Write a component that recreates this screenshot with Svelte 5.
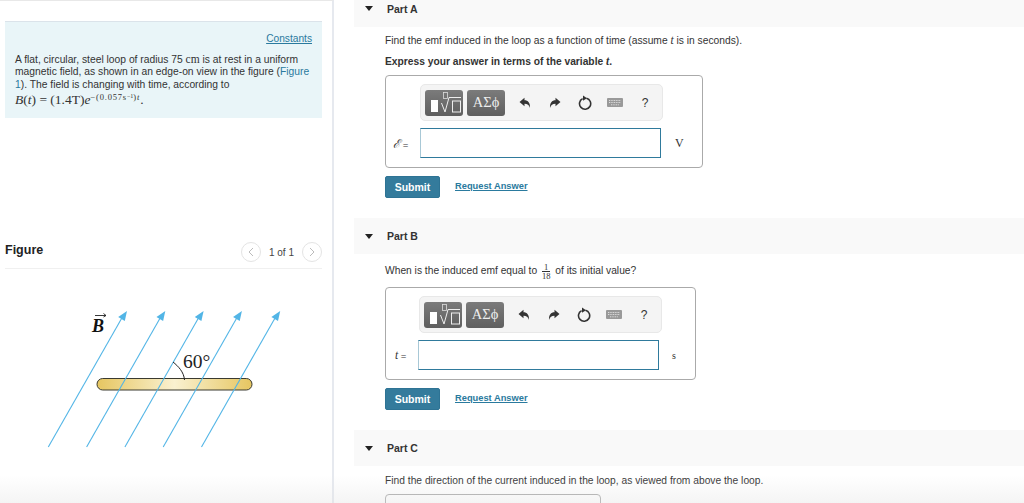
<script>
  const arrows = [0, 1, 2, 3, 4];
</script>

{#snippet toolbar()}
  <div class="toolbar">
    <span class="tool templates" aria-label="Templates">
      <svg width="38" height="24" viewBox="0 0 38 24">
        <rect x="6" y="9" width="7" height="12" fill="#fff" />
        <rect x="18.500" y="1.500" width="4" height="6" fill="none" stroke="#ddd" stroke-width="0.800" />
        <path d="M16.500 12 L20 21 L24 6.500 H36" fill="none" stroke="#eee" stroke-width="1" />
        <rect x="27.500" y="10" width="8" height="11" fill="none" stroke="#eee" stroke-width="1" />
      </svg>
    </span>
    <span class="tool greek">ΑΣϕ</span>
    <span class="slot"><svg width="12" height="12" viewBox="0 0 12 12"><path d="M0.500 5 L5.500 0.800 V3.300 C9 3.300 11.300 5.800 11 11 C10 7.800 8.500 6.800 5.500 6.800 V9.200 Z" fill="#333" /></svg></span>
    <span class="slot"><svg width="12" height="12" viewBox="0 0 12 12"><path d="M11.500 5 L6.500 0.800 V3.300 C3 3.300 0.700 5.800 1 11 C2 7.800 3.500 6.800 6.500 6.800 V9.200 Z" fill="#333" /></svg></span>
    <span class="slot"><svg width="14" height="16" viewBox="0 0 14 16"><path d="M8.500 3.200 A5.600 5.600 0 1 1 4.600 3.600" fill="none" stroke="#333" stroke-width="1.600" /><path d="M5 0.500 L9 3.200 L5 5.800 Z" fill="#333" /></svg></span>
    <span class="slot"><svg width="16" height="9" viewBox="0 0 16 9"><rect width="16" height="9" rx="1" fill="#999" /><path d="M2 2.500 H14 M2 4.500 H14 M4 6.800 H12" stroke="#ddd" stroke-width="1" stroke-dasharray="1 0.700" /></svg></span>
    <span class="slot help">?</span>
  </div>
{/snippet}

{#snippet actions()}
  <div class="actions">
    <button class="submit">Submit</button>
    <a class="request" href="#request">Request Answer</a>
  </div>
{/snippet}

<div class="page">
  <aside class="left">
    <section class="intro">
      <div class="constants"><a href="#constants">Constants</a></div>
      <p>A flat, circular, steel loop of radius 75 <span class="m">cm</span> is at rest in a uniform magnetic field, as shown in an edge-on view in the figure (<a href="#figure">Figure 1</a>). The field is changing with time, according to</p>
      <p class="formula"><i>B</i>(<i>t</i>) = (1.4T)<i>e</i><sup>−(0.057s<sup>−1</sup>)<i>t</i></sup>.</p>
    </section>

    <header class="fig-head">
      <h2>Figure</h2>
      <div class="pager">
        <span class="round"><svg width="6" height="10" viewBox="0 0 6 10"><path d="M5 1 L1 5 L5 9" fill="none" stroke="#bbb" /></svg></span>
        <span class="count">1 of 1</span>
        <span class="round"><svg width="6" height="10" viewBox="0 0 6 10"><path d="M1 1 L5 5 L1 9" fill="none" stroke="#bbb" /></svg></span>
      </div>
    </header>

    <svg class="figure" width="328" height="190" viewBox="0 269 328 190">
      <defs>
        <linearGradient id="bar" x1="0" x2="1" y1="0" y2="0">
          <stop offset="0" stop-color="#e6c661" />
          <stop offset="0.500" stop-color="#faf1d0" />
          <stop offset="1" stop-color="#e6c661" />
        </linearGradient>
      </defs>
      <rect x="97" y="378.500" width="155" height="11.500" rx="5.700" fill="url(#bar)" stroke="#3a3a30" stroke-width="1" />
      {#each arrows as i}
        <path d={`M${48.3 + i * 38.3} 447 L${123 + i * 38.3} 316`} stroke="#52b5e6" stroke-width="1.100" fill="none" />
        <path d={`M${127 + i * 38.3} 311 L${124.8 + i * 38.3} 321 L${118.2 + i * 38.3} 317 Z`} fill="#52b5e6" />
      {/each}
      <path d="M173 362 C178 366 184 372 184.500 380" fill="none" stroke="#222" stroke-width="1" />
      <text x="183" y="368" class="deg">60°</text>
      <text x="92" y="332" class="vec">B</text>
      <path d="M95 315.500 H106 M103.500 313.500 L106 315.500 L103.500 317" fill="none" stroke="#222" stroke-width="0.900" />
    </svg>
  </aside>

  <main class="right">
    <section class="part first">
      <header class="part-head"><span class="caret"></span><h3>Part A</h3></header>
      <div class="body">
        <p class="q">Find the emf induced in the loop as a function of time (assume <i class="mi">t</i> is in seconds).</p>
        <p class="q strong">Express your answer in terms of the variable <i class="mi">t</i>.</p>
        <div class="answer a">
          {@render toolbar()}
          <div class="entry">
            <span class="label"><i class="script">ℰ</i> =</span>
            <span class="input"></span>
            <span class="unit">V</span>
          </div>
        </div>
        {@render actions()}
      </div>
    </section>

    <section class="part second">
      <header class="part-head"><span class="caret"></span><h3>Part B</h3></header>
      <div class="body">
        <p class="q">When is the induced emf equal to <span class="frac"><span>1</span><span>18</span></span> of its initial value?</p>
        <div class="answer b">
          {@render toolbar()}
          <div class="entry">
            <span class="label"><i class="mi">t</i> =</span>
            <span class="input"></span>
            <span class="unit small">s</span>
          </div>
        </div>
        {@render actions()}
      </div>
    </section>

    <section class="part third">
      <header class="part-head"><span class="caret"></span><h3>Part C</h3></header>
      <div class="body">
        <p class="q">Find the direction of the current induced in the loop, as viewed from above the loop.</p>
        <div class="answer c"></div>
      </div>
    </section>
  </main>
  <div class="fade"></div>
</div>

<style>
  :global(body) { margin: 0; background: #fff; }
  .page {
    position: relative;
    width: 1024px;
    height: 503px;
    overflow: hidden;
    display: flex;
    font-family: "Liberation Sans", Arial, sans-serif;
    font-size: 10.300px;
    color: #333;
  }
  .left {
    box-sizing: border-box;
    width: 334px;
    flex: none;
    border-right: 2px solid #e6e9ef;
    border-top: 1px solid #e8e8e8;
    padding: 20px 10px 0 5px;
  }
  .intro {
    height: 97px;
    box-sizing: border-box;
    background: #e9f5f8;
    border-top: 1px solid #dbe3ea;
    padding: 11px 10px 0 10px;
    line-height: 12.500px;
  }
  .constants { text-align: right; height: 19.500px; font-size: 10.200px; }
  a { color: #2a7a9e; }
  .intro a[href="#figure"] { text-decoration: none; }
  .intro p { margin: 0; color: #333; }
  .m { font-family: "Liberation Serif", serif; font-size: 11.500px; }
  .intro .formula {
    font-family: "Liberation Serif", serif;
    font-size: 13.500px;
    line-height: 14px;
    margin-top: 2px;
  }
  .formula sup { font-size: 8.500px; letter-spacing: 0.800px; line-height: 0; vertical-align: 4px; }
  .formula sup sup { font-size: 6px; letter-spacing: 0; vertical-align: 2.500px; }
  .fig-head {
    margin-top: 122px;
    height: 29px;
    box-sizing: border-box;
    border-bottom: 1px solid #f0f0f0;
    display: flex;
    justify-content: space-between;
    align-items: flex-start;
  }
  h2 { margin: 0; font-size: 12.500px; line-height: 21px; color: #222; }
  .pager { display: flex; align-items: center; gap: 8px; margin-top: 2px; font-size: 10px; color: #444; }
  .pager .round {
    box-sizing: border-box;
    width: 20px; height: 20px;
    border: 1px solid #e4e4e4;
    border-radius: 50%;
    display: flex; align-items: center; justify-content: center;
  }
  .figure { display: block; margin-left: -5px; }
  .deg { font: 19.500px "Liberation Serif", serif; fill: #222; }
  .vec { font: italic bold 18px "Liberation Serif", serif; fill: #111; }

  .right { flex: 1; padding-left: 20px; }
  .part-head {
    height: 36px;
    background: #f9f9f9;
    display: flex;
    align-items: center;
    box-sizing: border-box;
    padding-left: 11px;
  }
  .first .part-head { height: 27px; padding-bottom: 10px; }
  .caret {
    width: 0; height: 0;
    border-left: 4px solid transparent;
    border-right: 4px solid transparent;
    border-top: 5px solid #222;
    margin-right: 14px;
  }
  h3 { margin: 0; font-size: 10.500px; color: #333; font-weight: bold; }
  .body { padding-left: 31px; }
  .q { margin: 0; font-size: 10.250px; line-height: 13px; color: #333; }
  .first .q { padding-top: 7px; }
  .first .q.strong { padding-top: 8px; font-weight: bold; }
  .mi { font-family: "Liberation Serif", serif; font-style: italic; font-size: 11.500px; }
  .answer {
    box-sizing: border-box;
    border: 1px solid #aaa;
    border-radius: 4px;
  }
  .a { width: 318px; height: 93px; margin-top: 7px; padding: 8px 0 0 34px; }
  .b { width: 311px; height: 93px; margin-top: 8px; padding: 8px 0 0 33px; }
  .c { width: 216px; height: 20px; margin-top: 7px; }
  .toolbar {
    box-sizing: border-box;
    width: 243px;
    height: 37px;
    background: #f4f4f4;
    border: 1px solid #e8e8e8;
    border-radius: 5px;
    display: flex;
    align-items: center;
    padding-left: 4px;
  }
  .tool {
    box-sizing: border-box;
    height: 26px;
    background: linear-gradient(#7b7b7b, #5f5f5f);
    border-radius: 3px;
    display: flex;
    align-items: center;
    justify-content: center;
  }
  .templates { width: 38px; }
  .greek {
    width: 38px;
    margin-left: 4px;
    margin-right: 5px;
    color: #eee;
    font: 14.500px "Liberation Serif", serif;
  }
  .slot { width: 30px; flex: none; display: flex; justify-content: center; align-items: center; }
  .help { font-size: 12px; color: #333; }
  .entry { display: flex; align-items: center; margin-top: 7px; margin-left: -27px; }
  .b .entry { margin-left: -24px; }
  .label { width: 27px; font-size: 9.500px; color: #333; }
  .b .label { width: 23px; }
  .script { font: italic 12px "DejaVu Serif", serif; }
  .input {
    box-sizing: border-box;
    width: 241px;
    height: 30px;
    background: #fff;
    border: 1px solid #2f7a9c;
    border-left-color: #a8c8d6;
  }
  .unit { margin-left: 14px; font: 12px "Liberation Serif", serif; color: #333; }
  .unit.small { font-size: 10px; margin-left: 13px; }
  .actions { display: flex; align-items: center; margin-top: 8px; gap: 15px; }
  .submit {
    width: 55px;
    height: 22px;
    padding: 0;
    border: 1px solid #2e7394;
    border-radius: 2px;
    background: #347b9c;
    color: #fff;
    font: bold 10.500px "Liberation Sans", Arial, sans-serif;
  }
  .request { font-size: 9.300px; font-weight: bold; color: #2a7a9e; position: relative; top: -1px; }
  .second { margin-top: 20px; }
  .second .q { padding-top: 8px; line-height: 17px; height: 17px; }
  .frac {
    display: inline-flex;
    flex-direction: column;
    vertical-align: middle;
    margin: 0 2px;
    font: 8.500px/8px "Liberation Serif", serif;
    text-align: center;
  }
  .frac span:first-child { border-bottom: 1px solid #333; }
  .third { margin-top: 20px; }
  .third .q { padding-top: 8px; line-height: 13px; }
  .fade {
    position: absolute;
    left: 0; right: 0; bottom: 0;
    height: 28px;
    background: linear-gradient(rgba(230,230,230,0), rgba(225,225,225,0.35));
    pointer-events: none;
  }
</style>
